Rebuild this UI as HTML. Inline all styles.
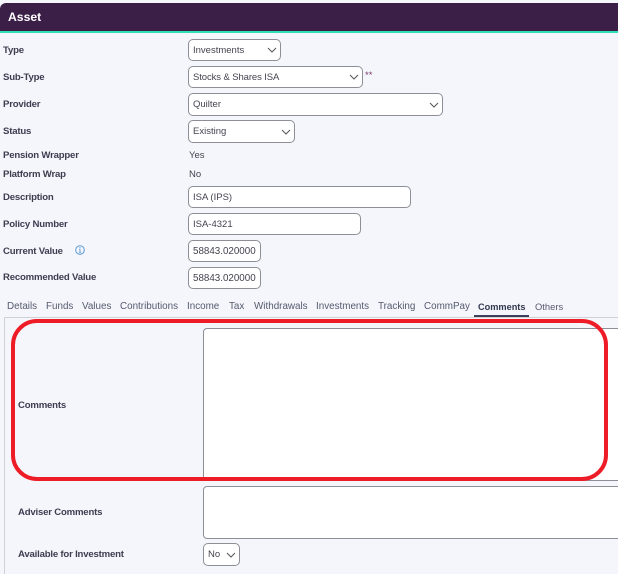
<!DOCTYPE html>
<html>
<head>
<meta charset="utf-8">
<style>
html,body{margin:0;padding:0;background:#f4f6fb}
body{width:618px;height:574px;position:relative;overflow:hidden;font-family:"Liberation Sans",sans-serif;font-size:10px;color:#3c3c50}
.a{position:absolute;white-space:nowrap}
.l{position:absolute;left:3px;font-weight:bold;font-size:9.6px;letter-spacing:-.2px;line-height:12px;color:#3d3d50;white-space:nowrap}
.b{position:absolute;box-sizing:border-box;left:188px;background:#fff;border:1px solid #8e8e96;border-radius:5px;font-size:9.5px;line-height:20px;padding-left:4px;color:#44444f;white-space:nowrap;overflow:hidden}
.b svg{position:absolute;top:7px}
.b span{display:block;position:relative;top:1px}
.c{width:63px;overflow:hidden;font-size:9.8px}
.t{position:absolute;top:301px;font-size:9.85px;line-height:12px;color:#555a6e;white-space:nowrap}
</style>
</head>
<body>
<div class="a" style="left:0;top:3px;width:618px;height:28px;background:#3c1f47;border-top-left-radius:6px"></div>
<div class="a" style="left:0;top:31px;width:618px;height:2px;background:#2fe0b5"></div>
<div class="a" style="left:8px;top:10px;font-size:12.2px;line-height:15px;font-weight:bold;color:#fff">Asset</div>

<div class="l" style="top:45px">Type</div>
<div class="l" style="top:72px">Sub-Type</div>
<div class="l" style="top:99px">Provider</div>
<div class="l" style="top:126px">Status</div>
<div class="l" style="top:150px">Pension Wrapper</div>
<div class="l" style="top:169px">Platform Wrap</div>
<div class="l" style="top:192px">Description</div>
<div class="l" style="top:219px">Policy Number</div>
<div class="l" style="top:246px">Current Value</div>
<div class="l" style="top:272px">Recommended Value</div>

<div class="b" style="top:39px;width:93px;height:22px"><span>Investments</span><svg style="left:78px" width="10" height="6" viewBox="0 0 10 6"><path d="M1 1l4 4 4-4" fill="none" stroke="#555" stroke-width="1"/></svg></div>
<div class="b" style="top:66px;width:175px;height:22px"><span style="letter-spacing:-.1px">Stocks &amp; Shares ISA</span><svg style="left:160px" width="10" height="6" viewBox="0 0 10 6"><path d="M1 1l4 4 4-4" fill="none" stroke="#555" stroke-width="1"/></svg></div>
<div class="a" style="left:365px;top:71px;font-size:9.5px;line-height:10px;color:#7a3a6a">**</div>
<div class="b" style="top:93px;width:255px;height:23px"><span>Quilter</span><svg style="left:240px;top:8px" width="10" height="6" viewBox="0 0 10 6"><path d="M1 1l4 4 4-4" fill="none" stroke="#555" stroke-width="1"/></svg></div>
<div class="b" style="top:120px;width:107px;height:23px"><span>Existing</span><svg style="left:92px;top:8px" width="10" height="6" viewBox="0 0 10 6"><path d="M1 1l4 4 4-4" fill="none" stroke="#555" stroke-width="1"/></svg></div>

<div class="a" style="left:189px;top:150px;line-height:12px;font-size:9.5px;color:#44444f">Yes</div>
<div class="a" style="left:189px;top:169px;line-height:12px;font-size:9.5px;color:#44444f">No</div>

<div class="b" style="top:186px;width:223px;height:22px"><span>ISA (IPS)</span></div>
<div class="b" style="top:213px;width:173px;height:22px"><span>ISA-4321</span></div>
<div class="b" style="top:240px;width:73px;height:22px"><span class="c">58843.020000</span></div>
<div class="b" style="top:267px;width:73px;height:22px"><span class="c">58843.020000</span></div>

<svg class="a" style="left:75px;top:245px" width="10" height="10" viewBox="0 0 10 10"><circle cx="5" cy="5" r="4.3" fill="none" stroke="#5b9bd5" stroke-width="1"/><path d="M5 4.4v3M4.2 7.5h1.6M4.3 4.4h.7" fill="none" stroke="#4a8ac5" stroke-width=".8"/><circle cx="5" cy="2.9" r=".6" fill="#4a8ac5"/></svg>

<div class="t" style="left:7px">Details</div>
<div class="t" style="left:46px">Funds</div>
<div class="t" style="left:82px">Values</div>
<div class="t" style="left:120px">Contributions</div>
<div class="t" style="left:187px">Income</div>
<div class="t" style="left:229px">Tax</div>
<div class="t" style="left:254px">Withdrawals</div>
<div class="t" style="left:316px">Investments</div>
<div class="t" style="left:378px">Tracking</div>
<div class="t" style="left:424px">CommPay</div>
<div class="t" style="left:478px;font-size:9.2px;font-weight:bold;color:#33384f">Comments</div>
<div class="t" style="left:535px;font-size:9.4px">Others</div>
<div class="a" style="left:474px;top:315px;width:55px;height:2px;background:#3c4058"></div>
<div class="a" style="left:4px;top:317px;width:614px;height:1px;background:#cfd1d6"></div>
<div class="a" style="left:4px;top:317px;width:1px;height:257px;background:#cfd1d6"></div>

<div class="l" style="left:18px;top:400px">Comments</div>
<div class="l" style="left:18px;top:507px">Adviser Comments</div>
<div class="l" style="left:18px;top:549px">Available for Investment</div>

<div class="a" style="box-sizing:border-box;left:203px;top:328px;width:430px;height:153px;background:#fff;border:1px solid #8e8e96;border-radius:4px"></div>
<div class="a" style="box-sizing:border-box;left:203px;top:486px;width:430px;height:53px;background:#fff;border:1px solid #8e8e96;border-radius:4px"></div>
<div class="b" style="left:203px;top:543px;width:37px;height:23px"><span>No</span><svg style="left:22px;top:8px" width="10" height="6" viewBox="0 0 10 6"><path d="M1 1l4 4 4-4" fill="none" stroke="#555" stroke-width="1"/></svg></div>

<div class="a" style="box-sizing:border-box;left:11px;top:319px;width:597px;height:162px;border:4px solid #ee1c27;border-radius:26px"></div>
</body>
</html>
